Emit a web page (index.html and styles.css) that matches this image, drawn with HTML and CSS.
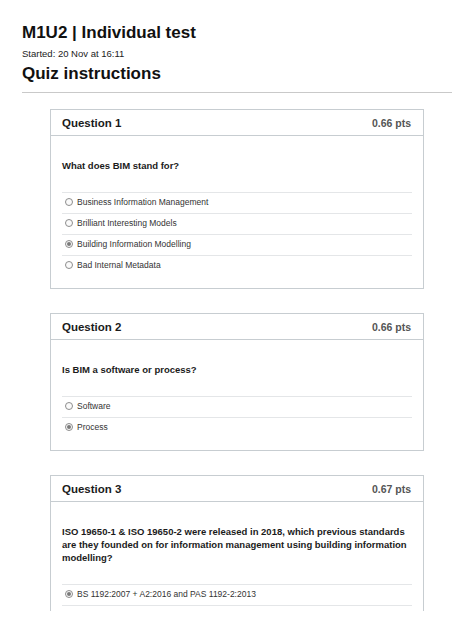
FILE: index.html
```html
<!DOCTYPE html>
<html lang="en">
<head>
<meta charset="utf-8">
<title>M1U2 | Individual test</title>
<link rel="stylesheet" href="styles.css">
</head>
<body>
  <div class="page">
    <header class="quiz-head">
      <h1 class="quiz-title">M1U2 | Individual test</h1>
      <p class="quiz-started">Started: 20 Nov at 16:11</p>
      <h2 class="quiz-subtitle">Quiz instructions</h2>
    </header>

    <main class="questions">
      <section class="question">
        <div class="question-header">
          <span class="question-name">Question 1</span>
          <span class="question-points">0.66 pts</span>
        </div>
        <div class="question-body">
          <p class="question-text">What does BIM stand for?</p>
          <ul class="answers">
            <li class="answer"><input class="radio" type="radio" name="q1" disabled> Business Information Management</li>
            <li class="answer"><input class="radio" type="radio" name="q1" disabled> Brilliant Interesting Models</li>
            <li class="answer"><input class="radio" type="radio" name="q1" checked disabled> Building Information Modelling</li>
            <li class="answer"><input class="radio" type="radio" name="q1" disabled> Bad Internal Metadata</li>
          </ul>
        </div>
      </section>

      <section class="question">
        <div class="question-header">
          <span class="question-name">Question 2</span>
          <span class="question-points">0.66 pts</span>
        </div>
        <div class="question-body">
          <p class="question-text">Is BIM a software or process?</p>
          <ul class="answers">
            <li class="answer"><input class="radio" type="radio" name="q2" disabled> Software</li>
            <li class="answer"><input class="radio" type="radio" name="q2" checked disabled> Process</li>
          </ul>
        </div>
      </section>

      <section class="question">
        <div class="question-header">
          <span class="question-name">Question 3</span>
          <span class="question-points">0.67 pts</span>
        </div>
        <div class="question-body">
          <p class="question-text">ISO 19650-1 &amp; ISO 19650-2 were released in 2018, which previous standards are they founded on for information management using building information modelling?</p>
          <ul class="answers">
            <li class="answer"><input class="radio" type="radio" name="q3" checked disabled> BS 1192:2007 + A2:2016 and PAS 1192-2:2013</li>
            <li class="answer"><input class="radio" type="radio" name="q3" disabled></li>
          </ul>
        </div>
      </section>
    </main>
  </div>
</body>
</html>
```

FILE: styles.css
```css
html, body {
  background: #ffffff;
}

body {
  margin: 0;
  padding: 22px 22px 0;
  font-family: "Liberation Sans", Arial, Helvetica, sans-serif;
  color: #1b1b1b;
  overflow: hidden;
}

/* Printed page area: content is cut off at the page edge */
.page {
  height: 589px;
  overflow: hidden;
}

/* Page heading */
.quiz-head {
  padding-bottom: 7px;
  border-bottom: 1px solid #c9c9c9;
}

.quiz-title {
  margin: 0;
  font-size: 17px;
  line-height: 22px;
  font-weight: 700;
  color: #111;
}

.quiz-started {
  margin: 4px 0 0;
  font-size: 9.5px;
  line-height: 12px;
  color: #222;
}

.quiz-subtitle {
  margin: 3px 0 0;
  font-size: 17px;
  line-height: 22px;
  font-weight: 700;
  color: #111;
}

/* Question cards */
.questions {
  margin: 16px 28px 0;
  display: flex;
  flex-direction: column;
  gap: 24px;
}

.question {
  border: 1px solid #c7cdd1;
  background: #fff;
}

.question-header {
  height: 25px;
  padding: 0 12px 0 11px;
  display: flex;
  align-items: center;
  justify-content: space-between;
  border-bottom: 1px solid #c7cdd1;
}

.question-name {
  font-size: 11.5px;
  font-weight: 700;
  color: #1b1b1b;
}

.question-points {
  font-size: 10.5px;
  font-weight: 700;
  color: #555;
}

.question-body {
  padding: 23px 11px 12px;
}

.question-text {
  margin: 0;
  font-size: 9.5px;
  line-height: 13px;
  font-weight: 700;
  color: #1b1b1b;
}

.answers {
  list-style: none;
  margin: 20px 0 0;
  padding: 0;
}

.question-text + .answers {
  margin-top: 20px;
}

.answer {
  display: flex;
  align-items: center;
  gap: 4px;
  border-top: 1px solid #e4e6e8;
  padding: 0 0 2px;
  height: 18px;
  font-size: 8.5px;
  color: #333;
}

/* Radio buttons */
.radio {
  appearance: none;
  -webkit-appearance: none;
  margin: 0 0 0 3px;
  width: 8px;
  height: 8px;
  border: 1px solid #8d8d8d;
  border-radius: 50%;
  background: #fafafa;
  display: inline-grid;
  place-content: center;
  flex: none;
}

.radio:checked::after {
  content: "";
  width: 4px;
  height: 4px;
  border-radius: 50%;
  background: #7a7a7a;
}
```
